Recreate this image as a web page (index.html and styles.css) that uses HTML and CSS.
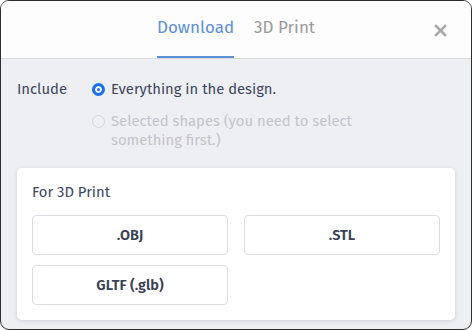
FILE: index.html
```html
<!DOCTYPE html>
<html>
<head>
<meta charset="utf-8">
<link rel="stylesheet" href="styles.css">
</head>
<body>
<div class="dialog">
  <div class="header">
    <div class="tabs">
      <div class="tab active">Download</div>
      <div class="tab">3D Print</div>
    </div>
    <button class="close" aria-label="Close">
      <svg width="13" height="13" viewBox="0 0 13 13"><path d="M2 2L11 11M11 2L2 11" stroke="#a9a9a9" stroke-width="2.6" stroke-linecap="square"/></svg>
    </button>
  </div>
  <div class="body">
    <div class="include">
      <div class="label">Include</div>
      <div class="options">
        <label class="option">
          <span class="radio checked"></span>
          <span class="opt-text">Everything in the design.</span>
        </label>
        <label class="option disabled">
          <span class="radio"></span>
          <span class="opt-text">Selected shapes (you need to select<br>something first.)</span>
        </label>
      </div>
    </div>
    <div class="card">
      <div class="card-title">For 3D Print</div>
      <div class="grid">
        <button class="fmt">.OBJ</button>
        <button class="fmt">.STL</button>
        <button class="fmt">GLTF (.glb)</button>
      </div>
    </div>
  </div>
</div>
</body>
</html>
```

FILE: styles.css
```css
html, body {
  margin: 0;
  padding: 0;
  background: #ffffff;
}
body {
  font-family: "Fira Sans", Roboto, "Noto Sans", sans-serif;
  color: #3c4660;
}
.dialog {
  box-sizing: border-box;
  width: 472px;
  height: 330px;
  border: 1px solid #2e2e2e;
  border-radius: 9px;
  overflow: hidden;
  background: #eeeff3;
  display: flex;
  flex-direction: column;
}
.header {
  height: 57px;
  background: #fdfdfe;
  border-bottom: 1px solid #dcdde3;
  position: relative;
  display: flex;
  justify-content: center;
  flex-shrink: 0;
}
.tabs {
  display: flex;
  gap: 20px;
}
.tab {
  font-size: 17px;
  color: #9a9a9a;
  line-height: 22px;
  height: 57px;
  box-sizing: border-box;
  padding-top: 16px;
  border-bottom: 2px solid transparent;
}
.tab.active {
  color: #5b8fd9;
  border-bottom-color: #5b8fd9;
}
.close {
  position: absolute;
  right: 24px;
  top: 23px;
  background: none;
  border: 0;
  padding: 0;
  width: 13px;
  height: 13px;
  display: flex;
}
.body {
  padding: 13px 16px 10px 16px;
  display: flex;
  flex-direction: column;
}
.include {
  display: flex;
  font-size: 14.8px;
  line-height: 19px;
}
.label {
  width: 75px;
  padding-top: 8px;
}
.options {
  display: flex;
  flex-direction: column;
  gap: 13px;
  padding-top: 8px;
}
.option {
  display: flex;
  align-items: flex-start;
  gap: 6px;
  color: #3c4660;
}
.option.disabled {
  color: #c2c4ca;
}
.radio {
  box-sizing: border-box;
  width: 13px;
  height: 13px;
  border-radius: 50%;
  border: 1px solid #d4d5da;
  margin-top: 3px;
  flex-shrink: 0;
  background: transparent;
}
.radio.checked {
  border: 3px solid #1a6ef5;
  background: #1a6ef5;
  box-shadow: inset 0 0 0 2px #ffffff;
}
.card {
  margin-top: 18px;
  background: #ffffff;
  border-radius: 5px;
  box-shadow: 0 1px 4px rgba(60, 70, 100, 0.18);
  padding: 15px;
  width: 438px;
  box-sizing: border-box;
}
.card-title {
  font-size: 14.8px;
  line-height: 19px;
  margin-bottom: 13px;
}
.grid {
  display: grid;
  grid-template-columns: 196px 196px;
  column-gap: 16px;
  row-gap: 10px;
}
.fmt {
  height: 40px;
  background: #ffffff;
  border: 1px solid #dcdde3;
  border-radius: 4px;
  font-family: inherit;
  font-weight: 600;
  font-size: 14.5px;
  color: #384256;
  padding: 0;
}
```
